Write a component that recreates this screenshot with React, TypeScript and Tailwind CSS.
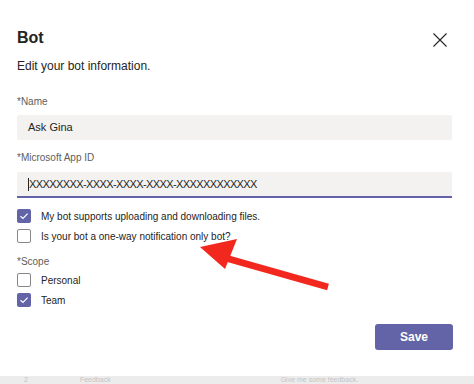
import React from 'react';

function Check({ checked, label }: { checked: boolean; label: string }) {
  return (
    <div className="flex items-center h-[20px]">
      {checked ? (
        <span className="w-[14px] h-[14px] rounded-[2px] bg-[#6264a7] flex items-center justify-center">
          <svg width="10" height="10" viewBox="0 0 10 10">
            <path d="M1.5 5.2 L4 7.5 L8.6 2.6" fill="none" stroke="#fff" strokeWidth="1.2" />
          </svg>
        </span>
      ) : (
        <span className="w-[14px] h-[14px] rounded-[2px] border border-[#8a8886] bg-white" />
      )}
      <span className="ml-[10px] text-[10px] text-[#252423]">{label}</span>
    </div>
  );
}

export default function App() {
  return (
    <div className="w-[474px] h-[384px] bg-white flex flex-col relative overflow-hidden font-['Liberation_Sans',Arial,sans-serif]">
      <div className="flex-1 pl-[17px] pr-[22px] pt-[28px]">
        {/* Header */}
        <div className="flex items-start justify-between">
          <h1 className="text-[16px] leading-[20px] font-bold text-[#252423]">Bot</h1>
          <button className="mt-[5px] mr-[5px] text-[#252423]">
            <svg width="14" height="14" viewBox="0 0 14 14">
              <path d="M0.5 0.5 L13.5 13.5 M13.5 0.5 L0.5 13.5" stroke="#252423" strokeWidth="1.1" />
            </svg>
          </button>
        </div>
        <p className="mt-[10px] text-[12px] leading-[16px] text-[#252423]">Edit your bot information.</p>

        <div className="mt-[22px] text-[10px] leading-[12px] text-[#605e5c]">*Name</div>
        <div className="mt-[7px] h-[25px] bg-[#f3f2f1] rounded-[2px] flex items-center pl-[11px] text-[11px] text-[#252423]">
          Ask Gina
        </div>

        <div className="mt-[12px] text-[10px] leading-[12px] text-[#605e5c]">*Microsoft App ID</div>
        <div className="mt-[8px] h-[26px] bg-[#f3f2f1] border-b-2 border-[#6264a7] rounded-t-[2px] flex items-center pl-[11px] text-[11px] tracking-[-0.6px] text-[#252423]">
          <span className="w-px h-[13px] bg-[#252423]" />
          XXXXXXXX-XXXX-XXXX-XXXX-XXXXXXXXXXXX
        </div>

        <div className="mt-[8px]">
          <Check checked label="My bot supports uploading and downloading files." />
          <Check checked={false} label="Is your bot a one-way notification only bot?" />
        </div>

        <div className="mt-[10px] text-[10px] leading-[12px] text-[#605e5c]">*Scope</div>
        <div className="mt-[2px]">
          <Check checked={false} label="Personal" />
          <Check checked label="Team" />
        </div>

        <div className="flex justify-end mt-[14px]">
          <button className="w-[78px] h-[26px] rounded-[3px] bg-[#6264a7] text-white text-[12px] font-bold mr-[-1px]">
            Save
          </button>
        </div>
      </div>

      {/* page behind the dialog */}
      <div className="h-[8px] bg-[#ececec] flex items-center text-[7px] leading-[8px] text-[#c4c4c4] overflow-hidden">
        <span className="ml-[24px]">2</span>
        <span className="ml-[52px]">Feedback</span>
        <span className="ml-[170px]">Give me some feedback.</span>
      </div>

      {/* red annotation arrow */}
      <svg className="absolute left-0 top-0 pointer-events-none" width="474" height="384">
        <line x1="222" y1="257" x2="328" y2="287" stroke="#f2281f" strokeWidth="6.5" />
        <polygon points="200,247 237,239 225,269" fill="#f2281f" />
      </svg>
    </div>
  );
}
